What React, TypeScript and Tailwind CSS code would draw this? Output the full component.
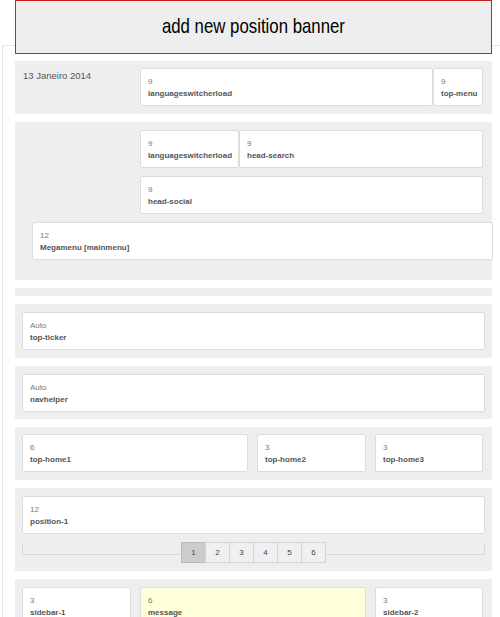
type CardProps = { size: string; name: string; className?: string };

function Card({ size, name, className = "" }: CardProps) {
  return (
    <div
      className={`h-[38px] rounded-[2px] border border-[#dcdcdc] bg-white pl-[7px] pt-[7px] leading-[12px] ${className}`}
    >
      <div className="text-[8px] text-[#777]">{size}</div>
      <div className="text-[8px] font-bold text-[#555]">{name}</div>
    </div>
  );
}

function Pager() {
  const pages = [1, 2, 3, 4, 5, 6];
  return (
    <div className="relative mt-[8px] h-[21px]">
      <div className="absolute left-0 right-0 top-[1px] h-[12px] rounded-b-[2px] border-x border-b border-[#d8d8d8]" />
      <div className="relative flex justify-center">
        {pages.map((p) => (
          <div
            key={p}
            className={`flex h-[21px] w-[25px] items-center justify-center border text-[8px] text-[#444] ${
              p === 1 ? "border-[#bbbbbb] bg-[#cccccc]" : "border-[#d4d4d4] bg-[#f0f0f0]"
            } ${p > 1 ? "-ml-px" : ""}`}
          >
            {p}
          </div>
        ))}
      </div>
    </div>
  );
}

export default function App() {
  return (
    <div className="relative h-[617px] w-[500px] overflow-hidden bg-white font-['Liberation_Sans',Arial,sans-serif]">
      {/* banner sits over the frame of the layout box */}
      <div className="absolute left-[15px] top-0 z-10 flex h-[54px] w-[477px] items-center justify-center border border-[#cc1f1f] bg-[#eeeeee] pb-[2px] text-black">
        <span className="inline-block scale-x-[0.8] text-[21px]">add new position banner</span>
      </div>

      <div className="ml-[2px] mt-[45px] flex flex-col gap-[8px] border-l border-t border-[#e6e6e6] pl-[12px] pr-[8px] pt-[15px]">
        {/* header row */}
        <div className="flex h-[53px] bg-[#eeeeee] pt-[7px]">
          <div className="w-[125px] pl-[8px] pt-[1px] text-[9.5px] text-[#555]">13 Janeiro 2014</div>
          <div className="flex">
            <Card size="9" name="languageswitcherload" className="w-[293px]" />
            <Card size="9" name="top-menu" className="w-[50px]" />
          </div>
        </div>

        {/* header block */}
        <div className="flex h-[158px] flex-col gap-[8px] bg-[#eeeeee] pt-[8px]">
          <div className="ml-[125px] flex">
            <Card size="9" name="languageswitcherload" className="w-[99px]" />
            <Card size="9" name="head-search" className="w-[244px]" />
          </div>
          <Card size="9" name="head-social" className="ml-[125px] w-[343px]" />
          <Card size="12" name="Megamenu [mainmenu]" className="ml-[17px] w-[461px]" />
        </div>

        <div className="h-[8px] bg-[#eeeeee]" />

        <div className="bg-[#eeeeee] px-[7px] pb-[8px] pt-[8px]">
          <Card size="Auto" name="top-ticker" />
        </div>

        <div className="bg-[#eeeeee] px-[7px] pb-[7px] pt-[8px]">
          <Card size="Auto" name="navhelper" />
        </div>

        <div className="flex gap-[9px] bg-[#eeeeee] px-[7px] pb-[8px] pt-[7px]">
          <Card size="6" name="top-home1" className="w-[226px]" />
          <Card size="3" name="top-home2" className="w-[109px]" />
          <Card size="3" name="top-home3" className="w-[108px]" />
        </div>

        <div className="bg-[#eeeeee] px-[7px] pb-[8px] pt-[8px]">
          <Card size="12" name="position-1" />
          <Pager />
        </div>

        <div className="flex gap-[9px] bg-[#eeeeee] px-[7px] pb-[8px] pt-[8px]">
          <Card size="3" name="sidebar-1" className="w-[109px]" />
          <Card size="6" name="message" className="w-[226px] !bg-[#ffffdb]" />
          <Card size="3" name="sidebar-2" className="w-[108px]" />
        </div>
      </div>
    </div>
  );
}
